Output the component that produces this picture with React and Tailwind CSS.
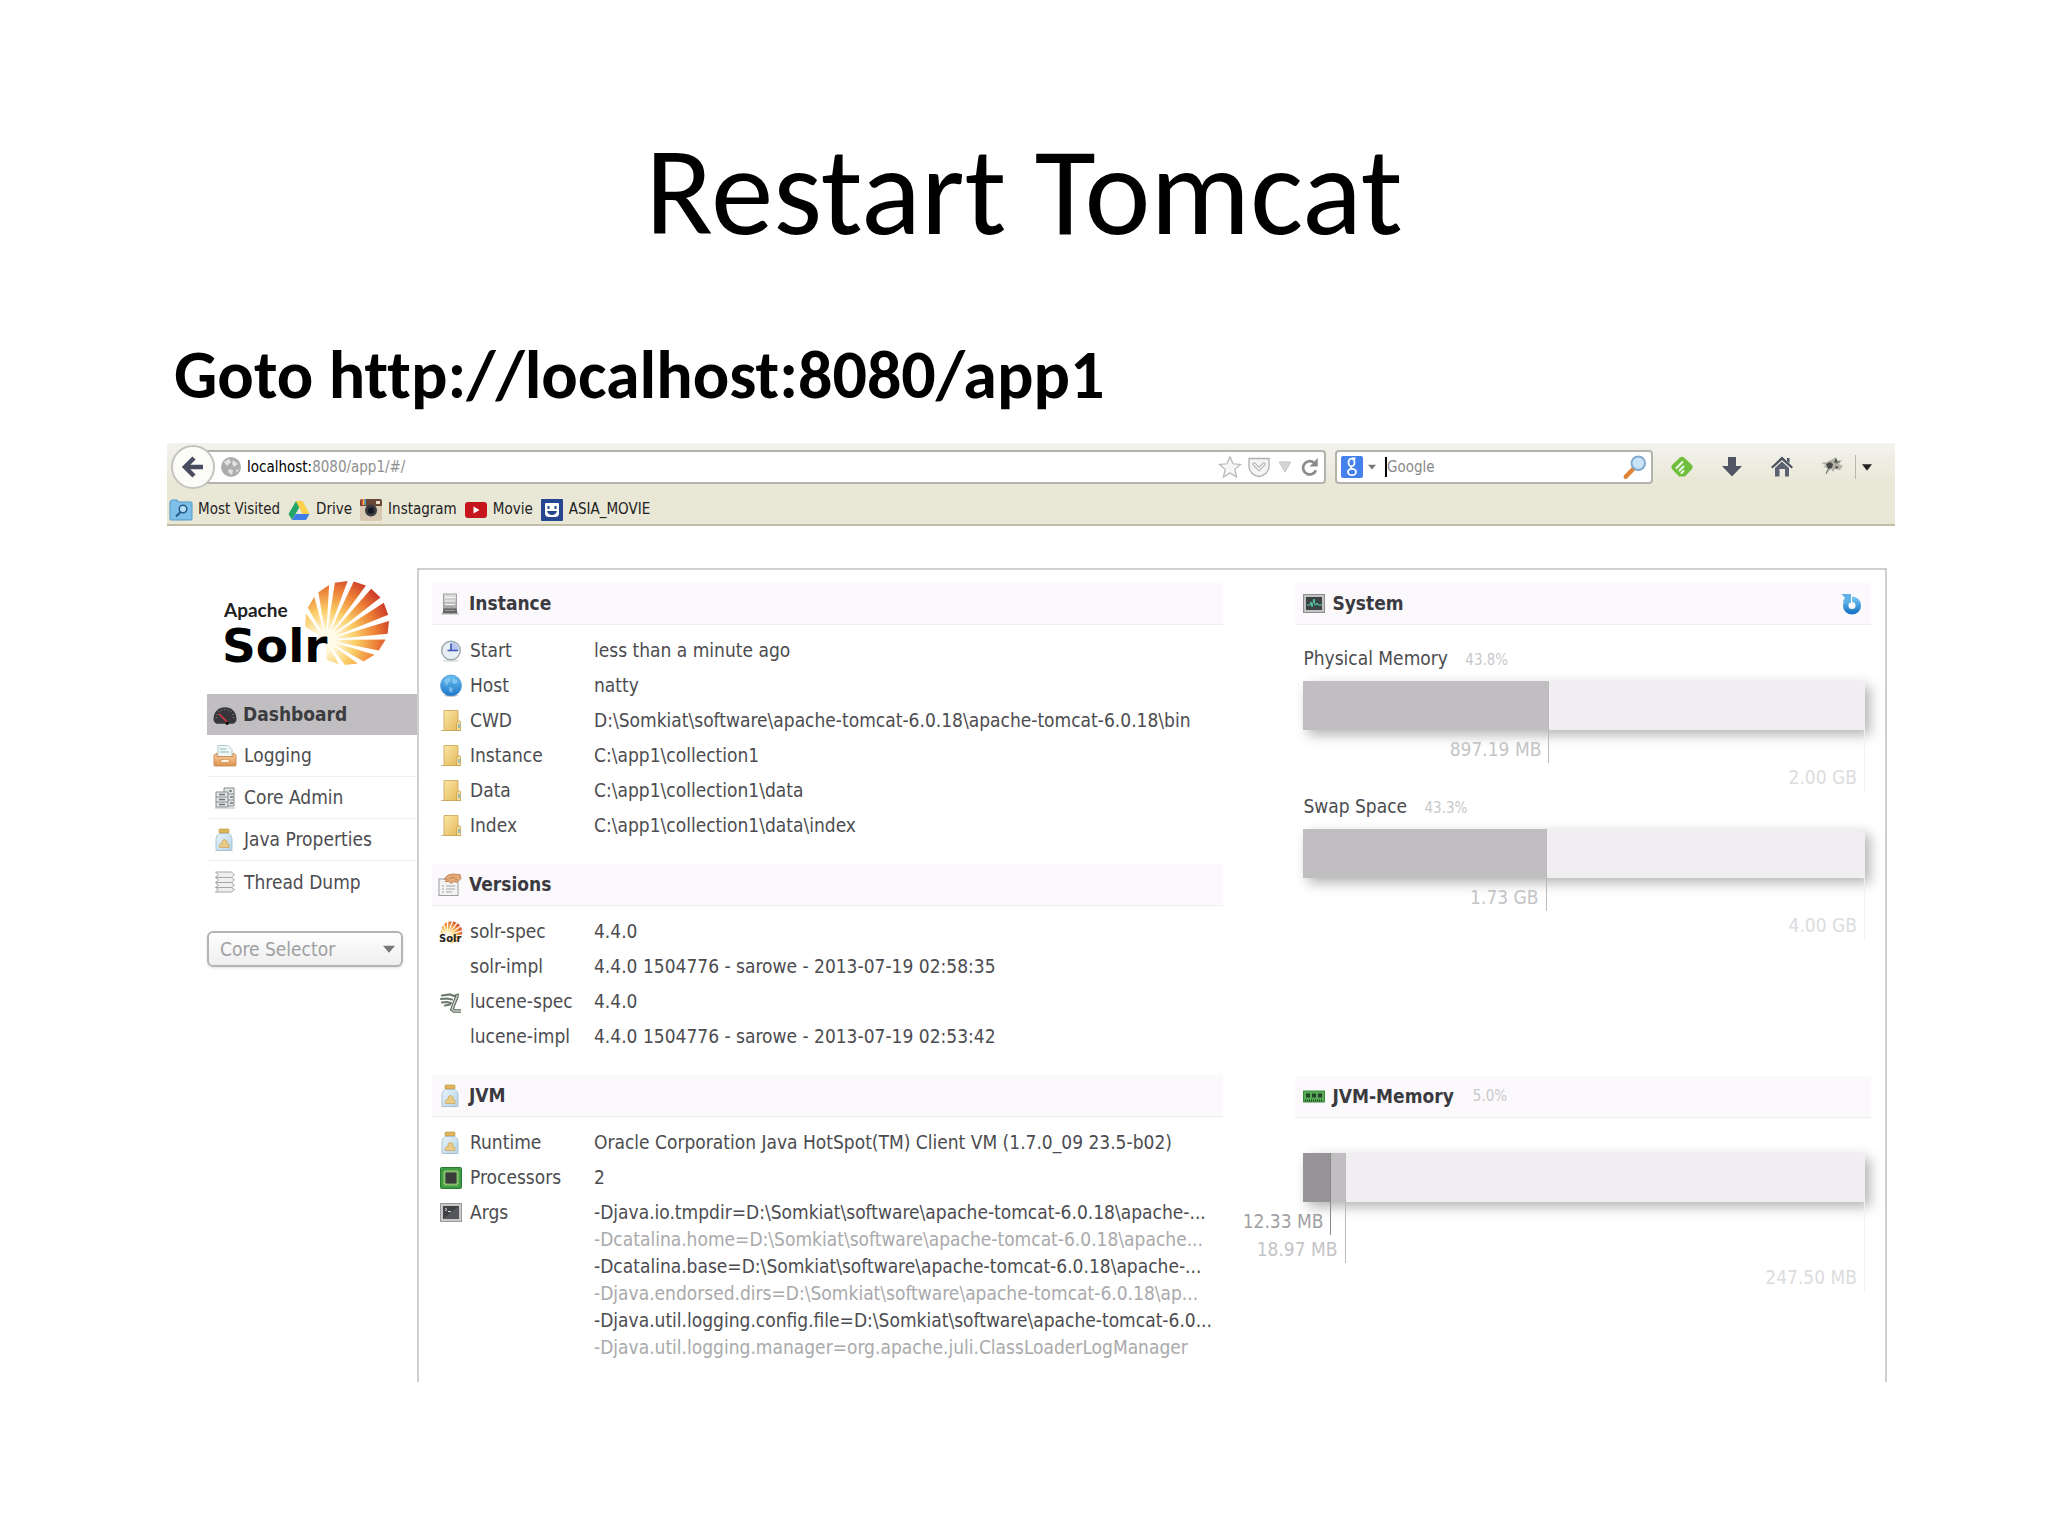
import React from "react";

const gradientDefs = (
  <svg width="0" height="0" className="absolute" aria-hidden="true">
    <defs>
      <radialGradient id="sun" gradientUnits="userSpaceOnUse" cx="103" cy="62" r="70">
        <stop offset="0.15" stopColor="#fff8dc" />
        <stop offset="0.42" stopColor="#fbcd66" />
        <stop offset="0.72" stopColor="#ec8036" />
        <stop offset="1" stopColor="#c93326" />
      </radialGradient>
      <linearGradient id="folder" x1="0" y1="0" x2="1" y2="1">
        <stop offset="0" stopColor="#fbe7a3" />
        <stop offset="1" stopColor="#e3b75a" />
      </linearGradient>
      <linearGradient id="blue" x1="0" y1="0" x2="0" y2="1">
        <stop offset="0" stopColor="#6cc0f0" />
        <stop offset="1" stopColor="#1f78c8" />
      </linearGradient>
      <linearGradient id="steel" x1="0" y1="0" x2="0" y2="1">
        <stop offset="0" stopColor="#e4e4e4" />
        <stop offset="1" stopColor="#a2a2a2" />
      </linearGradient>
      <linearGradient id="glass" x1="0" y1="0" x2="1" y2="1">
        <stop offset="0" stopColor="#e8f4fb" />
        <stop offset="1" stopColor="#b5d3e6" />
      </linearGradient>
      <linearGradient id="tray" x1="0" y1="0" x2="0" y2="1">
        <stop offset="0" stopColor="#fbd3a2" />
        <stop offset="1" stopColor="#dd9350" />
      </linearGradient>
    </defs>
  </svg>
);

const Icon = ({ children, size = "size-[22px]", box = "0 0 22 22" }) => (
  <svg viewBox={box} className={`${size} shrink-0 overflow-visible`} aria-hidden="true">
    {children}
  </svg>
);

const sunRay = (cx, cy, ox, oy, r, a, w) => {
  const pt = (deg) => {
    const t = (deg * Math.PI) / 180;
    return [ox + r * Math.cos(t), oy - r * Math.sin(t)];
  };
  const p = pt(a - w);
  const q = pt(a + w);
  return `M${cx} ${cy}L${p[0]} ${p[1]}L${q[0]} ${q[1]}Z`;
};

const rays = Array.from({ length: 12 }, (_, i) => -110 + i * 26);

const SolrLogo = () => (
  <svg viewBox="0 0 168 92" className="h-[92px] w-[168px] overflow-visible" role="img" aria-label="Apache Solr">
    <g fill="url(#sun)">
      {rays.map((a) => (
        <path key={a} d={sunRay(103, 62, 124, 45, 42, a, 8.8)} />
      ))}
    </g>
    <text x="1" y="39" fontFamily="Lato, sans-serif" fontWeight="700" fontSize="19" fill="#222">Apache</text>
    <text x="-1" y="84" fontFamily="DejaVu Sans, sans-serif" fontWeight="700" fontSize="47" fill="#000">Solr</text>
  </svg>
);

const Folder = () => (
  <Icon>
    <path d="M1 20.500h20" stroke="#c9b98d" />
    <path d="M4 0.500h14v11l1 1v8H4z" fill="url(#folder)" stroke="#c9a352" strokeWidth="0.8" />
    <path d="M16.500 20.500v-7l2.500-3 1.500 1v9z" fill="#f4dc95" stroke="#b98f3e" strokeWidth="0.6" />
    <path d="M19 14v4" stroke="#6fb3c0" strokeWidth="1.400" />
  </Icon>
);
const Jar = () => (
  <Icon>
    <path d="M1 21.500h18" stroke="#cfd9df" />
    <rect x="5" y="0" width="10" height="4" rx="1" fill="#e0b75c" stroke="#b98b33" strokeWidth="0.6" />
    <path d="M5 4.500h10q3 2 3 5v10q0 2-2 2H4q-2 0-2-2v-10q0-3 3-5z" fill="url(#glass)" stroke="#9dbacb" strokeWidth="0.8" />
    <path d="M5.500 18.500q-1-4 2.500-4-0.500-4 2.500-4t2.500 4q3 0 2 4z" fill="#e9cb86" stroke="#c99d4a" strokeWidth="0.6" />
  </Icon>
);
const Server = () => (
  <Icon>
    <path d="M1 21h18" stroke="#b7b7b7" />
    <rect x="3.500" y="1" width="13" height="15" fill="url(#steel)" stroke="#8f8f8f" strokeWidth="0.8" />
    <path d="M5 4.500h10M5 8h10M5 11.500h10" stroke="#f8f8f8" />
    <path d="M3.500 15.500h13l1 5h-15z" fill="#666" />
    <path d="M5 17.500h10" stroke="#999" />
  </Icon>
);
const Clock = () => (
  <Icon>
    <ellipse cx="11" cy="20.500" rx="8" ry="1.300" fill="#ddd" />
    <circle cx="11" cy="10.500" r="9.300" fill="#e9f0f3" stroke="#9ba9b0" strokeWidth="1.400" />
    <path d="M11 10.500V2.500a8 8 0 0 1 8 8z" fill="#b5c4f0" />
    <path d="M11 3.500v7.500M7.500 10.500h10.500" stroke="#3f55b5" strokeWidth="1.600" />
  </Icon>
);
const Globe = () => (
  <Icon>
    <ellipse cx="11" cy="20.500" rx="7" ry="1.300" fill="#ccc" />
    <circle cx="11" cy="10.500" r="10.500" fill="url(#blue)" stroke="#2a7fc6" strokeWidth="0.6" />
    <path d="M4 6q3-4 6-3l1 3-3 2-1 3zM13 3l5 3-2 3-4-1zM9 12l4 1-1 5-3-2z" fill="#9bd5f7" opacity="0.600" />
  </Icon>
);
const Gauge = () => (
  <Icon size="size-6">
    <path d="M0.500 15C0.500 8 5 4 11 4s10.500 4 10.500 11q0 3-3 4H3.500q-3-1-3-4z" fill="#37373b" />
    <path d="M3 14q1-8 8-8t8 8" fill="none" stroke="#77777b" strokeDasharray="1 2" strokeWidth="1.400" />
    <path d="M5.500 10l8 8" stroke="#d2344a" strokeWidth="1.500" />
    <circle cx="13" cy="18.500" r="1.600" fill="#111" />
  </Icon>
);
const Tray = () => (
  <Icon>
    <path d="M4 0.500h10l4 4v9H4z" fill="#edf7f7" stroke="#9fbdbd" strokeWidth="0.8" />
    <path d="M6 4h6M6 7h9" stroke="#8db4b8" />
    <path d="M0 10l3-2v3.500h16V8l3 2v10q0 1-1 1H1q-1 0-1-1z" fill="url(#tray)" stroke="#c08045" strokeWidth="0.8" />
    <path d="M7 14.500h8v3H7z" fill="#fff1de" stroke="#c58a52" strokeWidth="0.6" />
  </Icon>
);
const Cabinets = () => (
  <Icon>
    <g fill="#e3e6e6" stroke="#858b8b">
      <path d="M10 1h10v18H10z" />
      <path d="M10 7h10M10 13h10" />
      <path d="M2 5h12v15H2z" />
      <path d="M2 10h12M2 15h12" />
    </g>
    <path d="M5 7.500h6M5 12.500h6M5 17.500h6M15 4h3M16 10h3M16 16h3" stroke="#6d7373" strokeWidth="1.400" />
    <path d="M1 21h20" stroke="#b9b9b9" />
  </Icon>
);
const Threads = () => (
  <Icon>
    <g fill="#efefef" stroke="#a5a5a5">
      <path d="M1.500 1h16l3 3-3 2.500h-16l3-2.500z" />
      <path d="M1.500 6.500h16l3 2.500-3 2.500h-16l3-2.500z" />
      <path d="M1.500 11.500h16l3 2.500-3 2.500h-16l3-2.500z" />
      <path d="M1.500 16.500h16l3 2-3 2.500h-16l3-2.500z" />
    </g>
  </Icon>
);
const Contract = () => (
  <Icon>
    <rect x="-1" y="5" width="19" height="16.500" fill="#f3f3f3" stroke="#9c9c9c" />
    <path d="M2 12h2M6 12h9M2 15h2M6 15h9M2 18h2M6 18h6" stroke="#a5a5a5" />
    <path d="M4 5l4-4 5-1 7 0.500 1 4-4 4-3-1-3 2-2-2-4 0 2-2z" fill="#e3a878" stroke="#b97c4e" strokeWidth="0.8" />
    <path d="M9 5l4-2 4 3" fill="none" stroke="#b97c4e" strokeWidth="0.8" />
  </Icon>
);
const MiniSolr = () => (
  <Icon>
    <g fill="url(#sun)" transform="translate(-18.500 -0.500) scale(0.25)">
      {rays.map((a) => (
        <path key={a} d={sunRay(103, 62, 120, 46, 43, a, 8.8)} />
      ))}
    </g>
    <text x="-1" y="20.500" fontFamily="DejaVu Sans, sans-serif" fontWeight="700" fontSize="10" fill="#222">Solr</text>
  </Icon>
);
const Lucene = () => (
  <Icon>
    <path d="M2 4.500l8-1 4 1.500 4-1.500M1 8l6-0.500 5 1M2 11.500l5-0.500 4 1M5 14.500l5-1" fill="none" stroke="#6b7b6d" strokeWidth="2.200" strokeLinecap="round" />
    <path d="M17.500 4l-4 10-1.500 4.500 2 1.500h7" fill="none" stroke="#5d6b60" strokeWidth="3.600" />
    <path d="M17.500 4l-4 10-1.500 4.500 2 1.500h7" fill="none" stroke="#c5cfc4" strokeWidth="1.400" />
  </Icon>
);
const Cpu = () => (
  <Icon>
    <rect x="0.500" y="0.500" width="21" height="21" rx="1" fill="#3f9e45" stroke="#2b7a31" />
    <rect x="4.500" y="4.500" width="13" height="13" fill="none" stroke="#c3d98b" strokeDasharray="1 1" strokeWidth="2.500" />
    <rect x="5.500" y="5.500" width="11" height="11" fill="#3b3b3b" />
  </Icon>
);
const Terminal = () => (
  <Icon>
    <rect x="0.500" y="1.500" width="21" height="18" fill="#c9c9c9" stroke="#9a9a9a" />
    <rect x="3" y="4" width="16" height="13" fill="#3f4145" />
    <path d="M3 17L19 4v13z" fill="#54565b" />
    <path d="M5 6l2 1.500L5 9M8 9.500h3" fill="none" stroke="#ddd" />
  </Icon>
);
const Monitor = () => (
  <Icon>
    <rect x="0.500" y="1.500" width="21" height="18" fill="#c3c3c3" stroke="#8d8d8d" />
    <rect x="3" y="4" width="16" height="13" fill="#3c4345" />
    <path d="M4 12h3l1-3 1 5 2-8 1 6h1l1-2 1 2h4" fill="none" stroke="#56d0a5" />
  </Icon>
);
const Ram = () => (
  <Icon>
    <rect x="0.500" y="5" width="21" height="11" fill="#57ac55" stroke="#3b8b3d" />
    <path d="M3 7.500h4v4H3zM9 7.500h4v4H9zM15 7.500h4v4h-4z" fill="#27452a" />
    <path d="M2 14.500h18" stroke="#1f4723" strokeDasharray="1 1" strokeWidth="2" />
  </Icon>
);

const navItems = [
  { label: "Logging", icon: Tray },
  { label: "Core Admin", icon: Cabinets },
  { label: "Java Properties", icon: Jar },
  { label: "Thread Dump", icon: Threads },
];

const instance = [
  ["Start", "less than a minute ago", Clock],
  ["Host", "natty", Globe],
  ["CWD", "D:\\Somkiat\\software\\apache-tomcat-6.0.18\\apache-tomcat-6.0.18\\bin", Folder],
  ["Instance", "C:\\app1\\collection1", Folder],
  ["Data", "C:\\app1\\collection1\\data", Folder],
  ["Index", "C:\\app1\\collection1\\data\\index", Folder],
];
const versions = [
  ["solr-spec", "4.4.0", MiniSolr],
  ["solr-impl", "4.4.0 1504776 - sarowe - 2013-07-19 02:58:35", null],
  ["lucene-spec", "4.4.0", Lucene],
  ["lucene-impl", "4.4.0 1504776 - sarowe - 2013-07-19 02:53:42", null],
];
const args = [
  "-Djava.io.tmpdir=D:\\Somkiat\\software\\apache-tomcat-6.0.18\\apache-...",
  "-Dcatalina.home=D:\\Somkiat\\software\\apache-tomcat-6.0.18\\apache...",
  "-Dcatalina.base=D:\\Somkiat\\software\\apache-tomcat-6.0.18\\apache-...",
  "-Djava.endorsed.dirs=D:\\Somkiat\\software\\apache-tomcat-6.0.18\\ap...",
  "-Djava.util.logging.config.file=D:\\Somkiat\\software\\apache-tomcat-6.0...",
  "-Djava.util.logging.manager=org.apache.juli.ClassLoaderLogManager",
];
const jvm = [
  ["Runtime", "Oracle Corporation Java HotSpot(TM) Client VM (1.7.0_09 23.5-b02)", Jar],
  ["Processors", "2", Cpu],
  [
    "Args",
    <ul>
      {args.map((a, i) => (
        <li key={a} className={i % 2 ? "text-[#a9a9ab]" : ""}>{a}</li>
      ))}
    </ul>,
    Terminal,
  ],
];

const Heading = ({ icon: I, title, percent, children }) => (
  <h3 className="flex h-[42px] items-center gap-[7px] border-b border-[#eeeef0] bg-[#fbf9fc] px-2 font-bold text-[#3a3a40]">
    <I />
    <span>{title}</span>
    {percent && <span className="ml-3 text-[15px] font-normal text-[#c8c8ca]">{percent}</span>}
    {children}
  </h3>
);

const Block = ({ icon, title, rows }) => (
  <section>
    <Heading icon={icon} title={title} />
    <dl className="grid grid-cols-[162px_1fr] gap-y-2 pt-3 leading-[27px]">
      {rows.map(([k, v, I]) => (
        <React.Fragment key={k}>
          <dt className="flex h-[27px] items-center gap-2 pl-2 whitespace-nowrap">
            <span className="w-[22px]">{I && <I />}</span>
            {k}
          </dt>
          <dd className="whitespace-nowrap">{v}</dd>
        </React.Fragment>
      ))}
    </dl>
  </section>
);

const marks = {
  short: "h-[82px]",
  mid: "h-[110px]",
};

const Bar = ({ parts, max, tall }) => (
  <div className="relative ml-2 mr-[6px] h-[49px] bg-[#f0eef1] shadow-[5px_5px_12px_#b4b4b4]">
    <div className={`absolute inset-x-0 top-0 flex items-end justify-end border-r border-[#f0f0f0] pr-[7px] pb-[3px] leading-[21px] text-[#dcdcde] ${tall}`}>{max}</div>
    {parts.map((p) => (
      <div key={p.label} className={`absolute top-0 left-0 flex items-end justify-end border-r pb-[3px] ${p.h} ${p.line}`} style={{ width: p.width }}>
        <div className={`absolute inset-x-0 top-0 h-[49px] ${p.fill}`} />
        <span className={`pr-[7px] leading-[21px] whitespace-nowrap ${p.text}`}>{p.label}</span>
      </div>
    ))}
  </div>
);

const bookmarks = [
  ["Most Visited", (
    <Icon>
      <path d="M0 4q0-3 2-3h5l2 2h12q1 0 1 1v16q0 1-1 1H1q-1 0-1-1z" fill="#7fc0ea" stroke="#4f98c9" />
      <circle cx="13" cy="10" r="3.800" fill="#b7e0f8" stroke="#255a86" strokeWidth="1.500" />
      <path d="M10.500 13L6 17.500" stroke="#255a86" strokeWidth="2" />
    </Icon>
  )],
  ["Drive", (
    <Icon>
      <path d="M8 2L0.500 15l3.500 6 7.500-13z" fill="#23a566" />
      <path d="M8 2h6.500l7 13h-7z" fill="#fdd04b" />
      <path d="M4 21l3.500-6H21.500L18 21z" fill="#3f7ee8" />
    </Icon>
  )],
  ["Instagram", (
    <Icon>
      <rect x="0" y="0" width="22" height="22" rx="2" fill="#d9c9b3" />
      <path d="M0 2q0-2 2-2h18q2 0 2 2v5H0z" fill="#6a4635" />
      <path d="M1.500 0h1.500v6H1.500z" fill="#e14b3d" />
      <path d="M3 0h1.500v6H3z" fill="#f0c43c" />
      <path d="M4.500 0H6v6H4.500z" fill="#4c9bd6" />
      <circle cx="11" cy="11.500" r="6" fill="#3a3a3e" />
      <circle cx="11" cy="11.500" r="3" fill="#141822" />
      <rect x="16" y="2" width="4" height="3" fill="#e8ddcb" />
    </Icon>
  )],
  ["Movie", (
    <Icon>
      <rect x="0" y="3" width="22" height="16" rx="3" fill="#c4161c" />
      <path d="M8.500 7.500v7l6-3.500z" fill="#fff" />
    </Icon>
  )],
  ["ASIA_MOVIE", (
    <Icon>
      <rect width="22" height="22" rx="1" fill="#274690" />
      <path d="M5 4h12q1 0 1 1v9q0 4-4 4H8q-4 0-4-4V5q0-1 1-1z" fill="#fff" />
      <path d="M7.500 7v3M14.500 7v3" stroke="#274690" strokeWidth="2" />
      <path d="M6 12h10q-1 4-5 4t-5-4z" fill="#274690" />
    </Icon>
  )],
];

const Browser = () => (
  <div className="border-b-2 border-[#c0bda4] bg-linear-to-b from-[#f3f3ee] to-[#e9e7d6] to-50% pt-[2px] text-[15px] text-[#222] [font-family:'DejaVu_Sans_Condensed','DejaVu_Sans',sans-serif]">
    <div className="flex h-[44px] items-center pl-1">
      <button aria-label="Back" className="z-10 flex size-11 shrink-0 items-center justify-center rounded-full border-2 border-[#c4c3bd] bg-[#fbfbf8]">
        <Icon>
          <path d="M12 2L3 11l9 9M4 11h17" fill="none" stroke="#474d5e" strokeWidth="4.500" />
        </Icon>
      </button>
      <div className="-ml-2 flex h-[34px] flex-1 items-center gap-[5px] rounded-r-sm border-2 border-[#b3b3ae] bg-white pr-1 pl-[11px]">
        <Icon>
          <circle cx="11" cy="11" r="10" fill="#adadad" />
          <path d="M4 6l5-3 2 3-4 4zM13 4l5 4-4 3-2-3zM9 13l4 1-1 5-4-3zM16 14l3-1-2 4z" fill="#e3e3e3" />
        </Icon>
        <p className="flex-1 text-black">localhost:<span className="text-[#8e8e8e]">8080/app1/#/</span></p>
        <div className="flex items-center gap-[7px]">
          <Icon>
            <path d="M11 0.800l3 7 7.500.600-5.700 5 1.800 7.600-6.600-4-6.600 4 1.800-7.600-5.700-5 7.500-.600z" fill="#f7f7f7" stroke="#b5b5b5" strokeWidth="1.200" />
          </Icon>
          <Icon>
            <path d="M1 2.500h20v8c0 5-4 9-10 10-6-1-10-5-10-10z" fill="#f4f4f4" stroke="#b0b0b0" strokeWidth="1.300" />
            <path d="M6 8l5 5 5-5" fill="none" stroke="#b0b0b0" strokeWidth="3.500" strokeLinecap="round" />
            <path d="M6 8l5 5 5-5" fill="none" stroke="#fafafa" strokeWidth="1.300" strokeLinecap="round" />
          </Icon>
          <Icon size="size-4">
            <path d="M3 4h16L11 18z" fill="#d6d6d6" stroke="#b4b4b4" />
          </Icon>
          <Icon size="size-5">
            <path d="M15 6A7.300 7.300 0 1 0 17.500 14.500" fill="none" stroke="#8c8c8c" strokeWidth="3" />
            <path d="M19.500 1v9.500h-9z" fill="#8c8c8c" />
          </Icon>
        </div>
      </div>
      <div className="ml-[9px] flex h-[34px] w-[318px] items-center rounded-sm border-2 border-[#b3b3ae] bg-white px-1">
        <Icon>
          <rect width="22" height="22" rx="2" fill="#4581ec" />
          <g fill="none" stroke="#fff" strokeWidth="1.800">
            <ellipse cx="10.500" cy="6.500" rx="3" ry="3.800" />
            <path d="M11 10.500q-2 1 0 2.500M14.500 2.500h-3.500" />
            <ellipse cx="11" cy="16" rx="4" ry="3.200" />
          </g>
        </Icon>
        <Icon size="mx-[5px] size-2"><path d="M0 5h22L11 18z" fill="#777" /></Icon>
        <input aria-label="Search" placeholder="Google" className="ml-1 h-5 min-w-0 flex-1 border-l-2 border-black placeholder:text-[#8a8a8a]" />
        <Icon size="size-6">
          <path d="M9.500 12.500L2.500 20" stroke="#df8438" strokeWidth="4" strokeLinecap="round" />
          <circle cx="14" cy="7.500" r="6.200" fill="#c9e4f8" stroke="#7fa9cd" strokeWidth="1.800" />
        </Icon>
      </div>
      <div className="mr-[23px] ml-[18px] flex items-center gap-[28px]">
        <Icon>
          <path d="M13 1.500l8 7.500q1.500 2 0 4l-7 7.500H8L1 13q-1.500-2 0-4l8-7.500q2-1.500 4 0z" fill="#70bf3c" />
          <path d="M5.500 12L11.500 6M8.500 14.500l4-4M10.500 17l2-2" stroke="#f0faea" strokeWidth="2" strokeLinecap="round" />
        </Icon>
        <Icon><path d="M7 1h8v9h6L11 20.500 1 10h6z" fill="#4f5565" /></Icon>
        <Icon>
          <path d="M11 0.500l11 10.500-1.500 1.500L11 4l-9.500 8.500L0 11z" fill="#4c5262" />
          <path d="M4 12l7-6.500 7 6.500v8.500h-4V13H8.500v7.500H4z" fill="#5b6170" />
          <path d="M16 2h2.500v5L16 5z" fill="#4c5262" />
        </Icon>
        <div className="flex items-center">
          <Icon>
            <path d="M0 7l6-1 4-2 5-3 1 4 5-1-3 4 4 2-3 4-5-1-2 3-2-3-5 5 2-6-5-1 3-2z" fill="#b3b3aa" />
            <path d="M5 8l4-2 3 2-1 4-4 1zM15 2l2 4-4 1zM14 10l4 1-3 2z" fill="#4a4a48" />
            <path d="M7 13l-2 5M19 5l-4 3" stroke="#77776f" />
          </Icon>
          <span className="ml-3 h-6 w-px bg-[#b9b7a8]" />
          <Icon size="ml-[6px] size-[10px]"><path d="M0 5h22L11 19z" fill="#222" /></Icon>
        </div>
      </div>
    </div>
    <nav className="flex h-[35px] items-center gap-2 pt-[6px] pl-[3px]">
      {bookmarks.map(([name, icon]) => (
        <a key={name} href="#" className="flex items-center gap-[6px]">
          {icon}
          {name}
        </a>
      ))}
    </nav>
  </div>
);

export default function App() {
  return (
    <main className="min-h-screen bg-white pt-[120px] pr-[153px] pb-[154px] pl-[167px]">
      {gradientDefs}
      <h1 className="-ml-[14px] text-center text-[125px] leading-[144px] text-black [font-family:Carlito,Lato,sans-serif] [font-variant-ligatures:none]">Restart Tomcat</h1>
      <p className="mt-[71px] pl-[7px] text-[68px] leading-[80px] font-bold text-black [font-family:Carlito,Lato,sans-serif] [font-variant-ligatures:none]">Goto http://localhost:8080/app1</p>
      <div className="mt-7">
        <Browser />
      </div>
      <div className="mt-[42px] mr-2 ml-10 flex text-[19px] text-[#4c4c50] [font-family:'DejaVu_Sans_Condensed','DejaVu_Sans',sans-serif]">
        <aside className="w-[210px] shrink-0">
          <div className="h-[126px] pt-[10px] pl-4">
            <SolrLogo />
          </div>
          <nav>
            <a href="#" className="flex h-[41px] items-center gap-[6px] bg-[#c0bec1] pl-[6px] font-bold text-[#3c3c40]">
              <Gauge />
              Dashboard
            </a>
            {navItems.map(({ label, icon: I }) => (
              <a key={label} href="#" className="flex h-[42px] items-center gap-2 border-b border-[#f0f0f0] pl-[7px] last:border-b-0">
                <I />
                {label}
              </a>
            ))}
          </nav>
          <div className="relative mt-[28px] w-[196px]">
            <select aria-label="Core Selector" className="h-9 w-full appearance-none rounded-md border-2 border-[#b4b4b6] bg-linear-to-b from-white to-[#eeeeee] px-[11px] text-[#a0a0a2] shadow-sm">
              <option>Core Selector</option>
            </select>
            <div className="pointer-events-none absolute inset-y-0 right-2 flex items-center">
              <Icon size="size-3"><path d="M0 5h22L11 18z" fill="#777" /></Icon>
            </div>
          </div>
        </aside>
        <div className="flex min-h-[814px] flex-1 justify-between border-2 border-b-0 border-[#cfcfd1] pt-[13px] pr-[14px] pl-[13px]">
          <div className="flex w-[55%] flex-col gap-[25px]">
            <Block icon={Server} title="Instance" rows={instance} />
            <Block icon={Contract} title="Versions" rows={versions} />
            <Block icon={Jar} title="JVM" rows={jvm} />
          </div>
          <div className="flex w-[40%] flex-col">
            <Heading icon={Monitor} title="System">
              <button aria-label="Refresh" className="ml-auto">
                <Icon>
                  <circle cx="11" cy="12.500" r="6.300" fill="none" stroke="url(#blue)" strokeWidth="5.500" />
                  <path d="M8 1l3 0v9l-3-3z" fill="#fff" />
                  <path d="M0.500 1H10v9.500L7 8l-3 3-2-3 2-3z" fill="#5fb0e6" />
                  <path d="M10.500 3v8" stroke="#fff" strokeWidth="1.200" />
                </Icon>
              </button>
            </Heading>
            <p className="mt-[20px] mb-[7px] pl-2 leading-[27px]">Physical Memory <span className="ml-3 text-[15px] text-[#c8c8ca]">43.8%</span></p>
            <Bar tall={marks.mid} max="2.00 GB" parts={[{ label: "897.19 MB", width: "43.8%", h: marks.short, fill: "bg-[#c0bec1]", line: "border-[#bbb]", text: "text-[#c4c4c6]" }]} />
            <p className="mt-[63px] mb-[7px] pl-2 leading-[27px]">Swap Space <span className="ml-3 text-[15px] text-[#c8c8ca]">43.3%</span></p>
            <Bar tall={marks.mid} max="4.00 GB" parts={[{ label: "1.73 GB", width: "43.3%", h: marks.short, fill: "bg-[#c0bec1]", line: "border-[#bbb]", text: "text-[#c4c4c6]" }]} />
            <div className="mt-[198px] mb-[35px]">
              <Heading icon={Ram} title="JVM-Memory" percent="5.0%" />
            </div>
            <Bar
              tall="h-[138px]"
              max="247.50 MB"
              parts={[
                { label: "18.97 MB", width: "7.5%", h: marks.mid, fill: "bg-[#c0bec1]", line: "border-[#bbb]", text: "text-[#c4c4c6]" },
                { label: "12.33 MB", width: "5%", h: marks.short, fill: "bg-[#969496]", line: "border-[#8a8a8a]", text: "text-[#a0a0a2]" },
              ]}
            />
          </div>
        </div>
      </div>
    </main>
  );
}
